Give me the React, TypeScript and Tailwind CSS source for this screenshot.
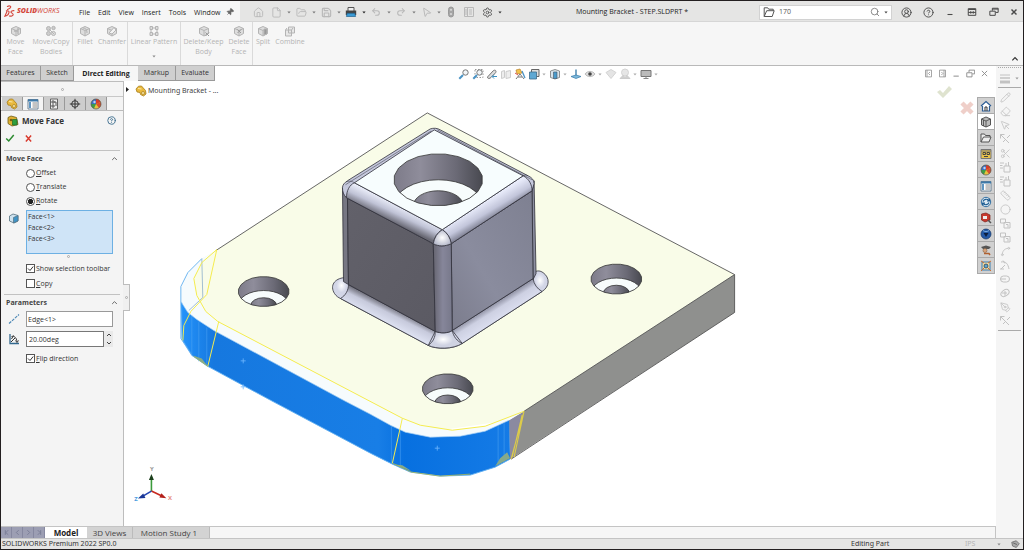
import React, { useState } from "react";
import {
  House, File, FolderOpen, Save, Undo2, Redo2, MousePointer2, Settings, Search,
  CircleUserRound, CircleHelp, Pin, Pencil, Eraser, MousePointer, Ruler, Spline, Circle, Scissors, PenTool,
} from "lucide-react";

type Kids = { children?: React.ReactNode };

function Svg({ children, size = 12 }: Kids & { size?: number }) {
  return (
    <svg width={size} height={size} viewBox="0 0 12 12" fill="none" stroke="currentColor" strokeWidth="1" aria-hidden="true" className="shrink-0">
      {children}
    </svg>
  );
}

function IconButton({ label, className = "w-3.5 h-3.5", children }: Kids & { label: string; className?: string }) {
  return (
    <button type="button" aria-label={label} className={"flex shrink-0 items-center justify-center " + className}>
      {children}
    </button>
  );
}

function Arrow({ className = "w-[11px] text-[#777]" }: { className?: string }) {
  return (
    <button type="button" aria-label="More options" className={"flex h-3 shrink-0 items-center justify-center " + className}>
      <svg width="4" height="3" viewBox="0 0 4 3" fill="currentColor"><path d="M.4.4h3.2L2 2.5z" /></svg>
    </button>
  );
}

/* ---------- title bar ---------- */

function Logo() {
  return (
    <div className="flex w-[70px] shrink-0 items-center gap-[2px] pl-[3px] text-[#d4463c]">
      <svg width="11" height="13" viewBox="0 0 11 13" fill="none" stroke="currentColor" strokeWidth="1.1" strokeLinecap="round">
        <path d="M3.4 1.4c1.7-.8 3.6-.6 3.3.8C6.5 3.2 5 4 3.5 4.5" />
        <path d="M2.4 5.9c2-.5 3 .3 2.5 2C4.400 9.800 2.600 11 .8 11.300L3 6.500" />
        <path d="M9.9 5.6C8.200 5.500 6.900 6 7 7.100c.1 1 2.300 1.200 2.200 2.500C9 11 7 11.400 5.400 11" />
      </svg>
      <span className="text-[7px] leading-[10px] italic"><b className="font-extrabold">SOLID</b>WORKS</span>
    </div>
  );
}

function TitleBar() {
  return (
    <header className="flex h-[21px] shrink-0 items-center border-b border-[#d6d6d6] bg-[#e5e5e4]">
      <div className="flex h-full w-[239px] shrink-0 items-center bg-[#f6f6f6]">
        <Logo />
        <nav className="flex flex-1 gap-2 pt-[3px] pl-2 text-[7px] leading-[10px] text-[#1c1c1c]">
          {["File", "Edit", "View", "Insert", "Tools", "Window"].map((m) => (
            <button type="button" key={m}>{m}</button>
          ))}
        </nav>
        <IconButton label="Pin menu" className="mr-1 h-3 w-3 pt-px text-[#666]"><Pin size={8} className="rotate-45" fill="currentColor" /></IconButton>
      </div>
      <div className="flex shrink-0 items-center pt-[2px] pl-[11px] text-[#b9b9b9]">
        <IconButton label="Home"><House size={11} strokeWidth={2} /></IconButton>
        <IconButton label="New" className="ml-1 h-3.5 w-3.5"><File size={11} strokeWidth={2} /></IconButton><Arrow />
        <IconButton label="Open"><FolderOpen size={11} strokeWidth={2} /></IconButton><Arrow />
        <IconButton label="Save"><Save size={11} strokeWidth={2.5} /></IconButton><Arrow />
        <IconButton label="Print">
          <Svg>
            <path d="M3 5V1.500h6V5" fill="#eee" stroke="#555" />
            <path d="M.8 4.500h10.400v4.500H.8z" fill="#444" stroke="none" />
            <path d="M2.200 7.300h7.600l.8 3.200H1.400z" fill="#3a9bd6" stroke="#24638e" strokeWidth=".7" />
          </Svg>
        </IconButton>
        <Arrow className="w-[11px] text-[#222]" />
        <IconButton label="Undo"><Undo2 size={10} strokeWidth={2.5} /></IconButton><Arrow />
        <IconButton label="Redo"><Redo2 size={10} strokeWidth={2.5} /></IconButton><Arrow />
        <IconButton label="Select"><MousePointer2 size={11} strokeWidth={2} className="rotate-12" /></IconButton><Arrow />
        <IconButton label="Rebuild">
          <Svg><rect x="3.5" y="1" width="5" height="10" rx="2.5" fill="#a5a5a5" stroke="#999" /><circle cx="6" cy="3.8" r="1.1" fill="#d6d6d6" stroke="none" /><circle cx="6" cy="8" r="1.1" fill="#d6d6d6" stroke="none" /></Svg>
        </IconButton>
        <IconButton label="File properties" className="mx-1 h-3.5 w-3.5">
          <Svg><path d="M1.500 1.500h9v9h-9zM4.500 1.500v9M1.500 4h3M1.500 6h3M1.500 8h3M6 4h3M6 6h3M6 8h3" /></Svg>
        </IconButton>
        <IconButton label="Options" className="h-3.5 w-3.5 text-[#555]"><Settings size={11} strokeWidth={2} /></IconButton>
        <Arrow className="w-[11px] text-[#333]" />
      </div>
      <h1 className="min-w-0 flex-1 truncate pt-[2px] text-center text-[7px] leading-[10px] text-[#222]">Mounting Bracket - STEP.SLDPRT *</h1>
      <label className="mt-[2px] flex h-[15px] w-[133px] shrink-0 items-center gap-1 border border-[#d2d2d2] bg-white px-[3px] text-[#777]">
        <Svg><path d="M1.200 10.500V1.800h3.500l1 1.400h4.500v1.500M1.200 10.500l2.500-5.800h7.500l-2 5.800z" stroke="#555" /></Svg>
        <input aria-label="Search" defaultValue="170" className="min-w-0 flex-1 bg-transparent text-[7px] leading-[10px] text-[#555] outline-none" />
        <Search size={10} strokeWidth={2} />
        <svg width="4" height="3" viewBox="0 0 4 3" fill="#444"><path d="M.4.4h3.200L2 2.500z" /></svg>
      </label>
      <div className="ml-[3px] flex shrink-0 pt-[2px] text-[#4a4a4a]">
        <IconButton label="Account" className="h-3.5 w-[22px]"><CircleUserRound size={11} strokeWidth={2} /></IconButton>
        <IconButton label="Help" className="h-3.5 w-[22px]"><CircleHelp size={11} strokeWidth={2} /></IconButton>
        <IconButton label="Minimize" className="h-3.5 w-[22px]"><Svg size={10}><path d="M3 9h6" strokeWidth="1.300" /></Svg></IconButton>
        <IconButton label="Arrange" className="h-3.5 w-[22px]"><Svg size={10}><path d="M1.500 2h9v8h-9zM1.500 3h9M1.500 6.500h9M4.500 5v3M7.500 5v3" strokeWidth="1.200" /></Svg></IconButton>
        <IconButton label="Restore" className="h-3.5 w-[22px]"><Svg size={10}><path d="M1 5h6.500v5H1zM4 4.500v-3h7v5H8M4 2.500h7" strokeWidth="1.200" /></Svg></IconButton>
        <IconButton label="Close" className="h-3.5 w-[18px]"><Svg size={10}><path d="M3 3l6 6M9 3L3 9" strokeWidth="1.700" /></Svg></IconButton>
      </div>
    </header>
  );
}

/* ---------- ribbon ---------- */

function CubeIcon({ extra }: { extra?: React.ReactNode }) {
  return (
    <Svg>
      <path d="M1.500 3.500L6 1.500l4.500 2v5L6 11l-4.500-2.500z" fill="#ddd" />
      <path d="M1.500 3.500L6 5.500l4.500-2M6 5.500V11" />
      {extra}
    </Svg>
  );
}

function Tool({ label, w, icon, drop }: { label: string[]; w: string; icon: React.ReactNode; drop?: boolean }) {
  return (
    <button type="button" className={"flex flex-col items-center text-[7px] leading-[10px] text-[#b4b4b4] " + w}>
      <span className="flex h-3 items-center">{icon}</span>
      {label.map((l) => <span key={l} className="whitespace-nowrap">{l}</span>)}
      {drop && <svg width="4" height="3" viewBox="0 0 4 3" fill="#888" className="mt-2"><path d="M.4.4h3.200L2 2.500z" /></svg>}
    </button>
  );
}

function Group({ children, last }: Kids & { last?: boolean }) {
  return <div className={"flex h-full pt-[3px] " + (last ? "" : "border-r border-[#dadada]")}>{children}</div>;
}

function Ribbon() {
  return (
    <section aria-label="Direct Editing tools" className="flex h-[44px] shrink-0 items-stretch border-b border-[#b9b9b9] bg-[#f6f6f6]">
      <Group>
        <Tool w="w-[29px]" label={["Move", "Face"]} icon={<CubeIcon extra={<path d="M4 6h4M8 3v6" strokeWidth="1.300" />} />} />
        <Tool w="w-[42px]" label={["Move/Copy", "Bodies"]} icon={<Svg><circle cx="3.5" cy="3.5" r="2" fill="#ccc" /><circle cx="8.5" cy="3" r="1.700" fill="#ccc" /><circle cx="3.5" cy="8.5" r="2" fill="#ccc" /><circle cx="8.5" cy="8.5" r="2" fill="#ddd" /><path d="M4 4l5 5" /></Svg>} />
      </Group>
      <Group>
        <Tool w="w-[24px]" label={["Fillet"]} icon={<CubeIcon extra={<path d="M4 3c3 0 4 2 4 5" />} />} />
        <Tool w="w-[30px]" label={["Chamfer"]} icon={<CubeIcon extra={<path d="M3 8l5-5.500L10 5l-4 4z" fill="#f3f3f3" />} />} />
      </Group>
      <Group>
        <Tool w="w-[52px]" drop label={["Linear Pattern"]} icon={<Svg><path d="M2 1.500h2.500V4.500H2zM7.500 1.500H10V4.500H7.500zM2 7.500h2.500v3H2zM7.500 7.500H10v3H7.500zM5 3h2M5 9h2M3 5v2M9 5v2" fill="#ddd" /></Svg>} />
      </Group>
      <Group>
        <Tool w="w-[45px]" label={["Delete/Keep", "Body"]} icon={<CubeIcon extra={<path d="M7.500 7.500l3.500 3.500M11 7.500L7.500 11" stroke="#999" />} />} />
        <Tool w="w-[26px]" label={["Delete", "Face"]} icon={<CubeIcon extra={<path d="M4.500 4.500l3.500 3.500M8 4.500L4.500 8" stroke="#999" />} />} />
      </Group>
      <Group last>
        <Tool w="w-[20px]" label={["Split"]} icon={<CubeIcon extra={<path d="M7 4l3 0v5l-3 1z" fill="#999" />} />} />
        <Tool w="w-[34px]" label={["Combine"]} icon={<Svg><path d="M1.500 5h6v6h-6zM4.500 2h6v6h-6z" fill="#ddd" fillOpacity=".6" /><path d="M1.500 5l1.500-2M7.500 5L9 3" /></Svg>} />
      </Group>
      <IconButton label="Collapse ribbon" className="mr-0.5 ml-auto h-3 w-3 self-end text-[#333]"><Svg size={8}><path d="M2 8l4-4 4 4" strokeWidth="1.800" /></Svg></IconButton>
    </section>
  );
}

/* ---------- command tabs and view toolbar ---------- */

function Magnifier({ box }: { box?: boolean }) {
  return (
    <Svg>
      {box && <path d="M3 1.500h8v8H3z" strokeDasharray="1.5 1.5" stroke="#999" />}
      <circle cx="7.5" cy="4.5" r="2.7" stroke="#777" fill="#f1f5f8" />
      <path d="M1.300 10.700L5 7" stroke="#4a93c4" strokeWidth="2" />
    </Svg>
  );
}

function TabRow() {
  const tabs: [string, string][] = [["Features", "w-[40px]"], ["Sketch", "w-[33px]"], ["Direct Editing", "w-[64px]"], ["Markup", "w-[38px]"], ["Evaluate", "w-[39px]"]];
  const small = "w-[7px] text-[#aaa]";
  return (
    <div className="flex h-[15px] shrink-0 bg-white">
      <div role="tablist" className="flex shrink-0 text-[7px] leading-[10px]">
        {tabs.map(([t, w]) => {
          const on = t === "Direct Editing";
          return (
            <button type="button" role="tab" aria-selected={on} key={t}
              className={w + " whitespace-nowrap " + (on ? "bg-[#f6f6f6] font-bold text-[#222]" : "border-r border-b border-[#999] bg-[#cfcfcf] text-[#333]")}>
              {t}
            </button>
          );
        })}
      </div>
      <div className="flex flex-1 items-center justify-center pt-px pr-5 text-[#777]">
        <IconButton label="Zoom to fit"><Magnifier /></IconButton>
        <IconButton label="Zoom to area"><Magnifier box /></IconButton>
        <IconButton label="Previous view"><Svg><path d="M1.500 9L7 3c2-2 4 0 2.500 1.800L5 9.500C3.500 11 1 10.500 1.500 9z" fill="#ddd" /><path d="M11 8.500H6.500M8 6.500l-2 2 2 2" stroke="#3a8fc0" /></Svg></IconButton>
        <IconButton label="Section view"><Svg><path d="M1.500 3.500l3-1v7l-3 1zM6 3.500l4.500-1v7L6 10.500z" fill="#eee" stroke="#ccc" /></Svg></IconButton>
        <IconButton label="Dynamic annotation views"><Svg><path d="M2 2l4-1 2 4-5 1z" fill="#f3c24b" stroke="#b9822c" strokeWidth=".7" /><path d="M2 11l4-5 4 5M4 9h4" stroke="#777" /><path d="M8 3l3 7" stroke="#4a93c4" strokeWidth="1.300" /><path d="M1 5l3 2" stroke="#d55" /></Svg></IconButton>
        <IconButton label="View orientation"><Svg><path d="M3.500 4V1.500h7.500V8.500H8.500" fill="#ddd" stroke="#666" /><path d="M1.500 4h7v7h-7z" fill="#5fa8d3" stroke="#3d6c8b" strokeWidth=".8" /></Svg></IconButton>
        <Arrow className={small} />
        <IconButton label="Display style"><Svg><path d="M1.500 3L6 1.500l4.500 1.500v6.500L6 11 1.500 9.500z" fill="#d7e4ec" stroke="#777" strokeWidth=".8" /><path d="M4.500 4h3.500v6.500H4.500z" fill="#4b9bcb" stroke="#456" strokeWidth=".6" /></Svg></IconButton>
        <Arrow className={small} />
        <IconButton label="Reference triad"><Svg><path d="M6 1.500V8" stroke="#3379a8" strokeWidth="1.300" /><path d="M1 8.500l5-1.500 5 1.500L6 10.500z" fill="#7db9dc" stroke="#3379a8" strokeWidth=".7" /></Svg></IconButton>
        <IconButton label="Hide or show items"><Svg><path d="M1 6c2.500-3.500 7.500-3.500 10 0-2.500 3.500-7.500 3.500-10 0z" stroke="#bbb" fill="#ddd" /><circle cx="6" cy="6" r="1.800" fill="#444" stroke="none" /></Svg></IconButton>
        <Arrow className={small} />
        <IconButton label="Edit appearance"><Svg><path d="M1 4.500L6 1.500l5 3L6 10.500z" fill="#e4e4e4" stroke="#d4d4d4" /></Svg></IconButton>
        <IconButton label="Apply scene"><Svg><circle cx="6" cy="4.5" r="3.5" fill="#e6e6e6" stroke="#d4d4d4" /><path d="M1 10.500l3-3 2 2 2-2 3 3z" fill="#d0d0d0" stroke="#ccc" /></Svg></IconButton>
        <Arrow className={small} />
        <IconButton label="View settings"><Svg><path d="M1 2.500h10V8.500H1z" fill="#bbb" stroke="#777" /><path d="M6 8.500v2M3.500 10.500h5" stroke="#888" /></Svg></IconButton>
        <Arrow className={small} />
      </div>
      <div className="flex shrink-0 items-center pr-[5px] text-[#8a8a8a]">
        <IconButton label="Previous pane"><Svg size={9}><path d="M2 1.500h8v9H2zM4 1.500v9M8 4L6 6l2 2" /></Svg></IconButton>
        <IconButton label="Next pane"><Svg size={9}><path d="M2 1.500h8v9H2zM8 1.500v9M4.500 4l2 2-2 2" /></Svg></IconButton>
        <IconButton label="Minimize document"><Svg size={9}><path d="M2 9.500h7" strokeWidth="1.300" /></Svg></IconButton>
        <IconButton label="Restore document"><Svg size={9}><path d="M1 5h7v5.500H1zM4 4.500v-3h7.500v5H8.500" strokeWidth="1.200" /></Svg></IconButton>
        <IconButton label="Close document"><Svg size={9}><path d="M2.500 2.500l7 7M9.500 2.500l-7 7" strokeWidth="1.200" /></Svg></IconButton>
      </div>
    </div>
  );
}

/* ---------- property manager ---------- */

function PartIcon() {
  return (
    <Svg>
      <path d="M1 4L3.500 1.200 6.500 1l4 4.500L11 9 8.500 11 5.500 9.500 5 7.500 2 7z" fill="#e9b93d" stroke="#a87f1c" strokeWidth=".8" />
      <circle cx="8" cy="8" r="1.500" fill="#fbe7a8" stroke="#9c7415" strokeWidth=".6" />
      <path d="M3 3.500l3.500.5" stroke="#fbe7a8" />
    </Svg>
  );
}

function BallIcon() {
  return (
    <Svg>
      <circle cx="6" cy="6" r="5" fill="#e8c33c" stroke="none" />
      <path d="M6 6V1a5 5 0 0 1 4.500 3z" fill="#d63b2c" stroke="none" />
      <path d="M6 6V1a5 5 0 0 0-5 5z" fill="#3b6fc4" stroke="none" />
      <path d="M6 6H1a5 5 0 0 0 3 4.600z" fill="#3d9b47" stroke="none" />
      <path d="M6 6l4.500-2A5 5 0 0 1 9 10z" fill="#d9502f" stroke="none" />
      <circle cx="6" cy="6" r="5" stroke="#555" strokeWidth=".7" />
      <circle cx="4.5" cy="4" r="1.200" fill="#fff" fillOpacity=".7" stroke="none" />
    </Svg>
  );
}

function TreeListIcon() {
  return (
    <Svg>
      <path d="M1 1.500h10v9.500H1z" fill="#fff" stroke="#6c8295" />
      <path d="M1 1.500h10V3.500H1z" fill="#3d79a8" stroke="none" />
      <path d="M2 5h2M2 7h2M2 9h2" stroke="#2c74ae" strokeWidth="1.300" />
      <path d="M5.500 5h4.500M5.500 7h4.500M5.500 9h4.500" stroke="#888" />
    </Svg>
  );
}

function SectionTitle({ children }: Kids) {
  return (
    <div className="mx-[3px] flex h-4 items-center border-t border-[#c2c2c2] px-[2px]">
      <h3 className="flex-1 text-[7px] leading-[10px] font-bold text-[#444]">{children}</h3>
      <IconButton label="Collapse section" className="h-2 w-2 text-[#555]"><Svg size={7}><path d="M2 8.500l4-4 4 4" strokeWidth="1.500" /></Svg></IconButton>
    </div>
  );
}

function Radio({ letter, rest, value, onPick }: { letter: string; rest: string; value: string; onPick: (v: string) => void }) {
  const name = letter + rest;
  return (
    <label className="flex h-[14px] items-center gap-px">
      <input type="radio" name="mode" checked={value === name} onChange={() => onPick(name)}
        className="h-[9px] w-[9px] appearance-none rounded-full border border-[#555] bg-white checked:bg-[radial-gradient(circle,#222_45%,#fff_60%)]" />
      <span><u className="underline-offset-1">{letter}</u>{rest}</span>
    </label>
  );
}

function Check({ children, on }: Kids & { on?: boolean }) {
  return (
    <label className="flex h-[15px] items-center gap-px">
      <span className="relative flex h-[9px] w-[9px] shrink-0">
        <input type="checkbox" defaultChecked={on} className="peer h-[9px] w-[9px] appearance-none border border-[#555] bg-white" />
        <svg viewBox="0 0 9 9" className="pointer-events-none absolute inset-0 hidden peer-checked:block" fill="none" stroke="#333"><path d="M2 4.500l2 2 3.200-4" /></svg>
      </span>
      <span className="whitespace-nowrap">{children}</span>
    </label>
  );
}

function Dot() {
  return <span className="block h-[3px] w-[3px] rounded-full border border-[#aaa]" />;
}

function PropertyPanel() {
  const [mode, setMode] = useState("Rotate");
  const tabs: [string, React.ReactNode][] = [
    ["Feature tree", <PartIcon />],
    ["Properties", <TreeListIcon />],
    ["Configurations", <Svg><path d="M2.500 1h7v10h-7z" fill="#eee" stroke="#666" /><path d="M4 3h2v2H4zM4 7h2v2H4zM6 4h2v4" stroke="#555" /></Svg>],
    ["Dimensions", <Svg><circle cx="6" cy="6" r="3.300" stroke="#333" /><path d="M6 .8v10.400M.8 6h10.400" stroke="#333" /></Svg>],
    ["Display", <BallIcon />],
  ];
  return (
    <aside className="relative z-10 flex w-[123px] shrink-0 flex-col border-t border-r border-[#bdbdbd] bg-[#f4f4f4] text-[7px] leading-[10px] text-[#333]">
      <div className="flex h-[15px] items-center justify-center border-b border-[#c8c8c8]"><Dot /></div>
      <div role="tablist" className="flex h-[14px] border-b border-[#bbb] px-px">
        {tabs.map(([n, icon], i) => (
          <button type="button" role="tab" key={n} aria-label={n} aria-selected={i === 1}
            className={"flex h-[13px] w-[21px] items-center justify-center border-r border-[#999] " + (i === 1 ? "bg-[#f4f4f4]" : "bg-[#cdcdcd]")}>
            {icon}
          </button>
        ))}
      </div>
      <div className="flex h-[19px] items-center gap-[3px] px-[6px]">
        <Svg><path d="M1 2.500L4 1l5.500 1.500L11 9.500 5 11 1 8.500z" fill="#e0b130" stroke="#6c5a17" strokeWidth=".8" /><path d="M5.500 4.500h4.500v5.500H5.500z" fill="#2f9e3f" stroke="#1d6c2a" strokeWidth=".7" /><circle cx="4" cy="5" r="1.300" fill="#7a5d12" stroke="none" /></Svg>
        <h2 className="flex-1 text-[8px] leading-[12px] font-bold">Move Face</h2>
        <IconButton label="Help" className="h-3 w-3 text-[#3f6f8f]"><CircleHelp size={9} strokeWidth={2.5} /></IconButton>
      </div>
      <div className="flex h-5 items-start gap-[6px] px-[3px] pt-[2px]">
        <IconButton label="OK" className="h-3 w-3"><Svg size={10}><path d="M1.500 6.500L4.500 9.500 10.500 2.500" stroke="#2b8a2f" strokeWidth="1.800" /></Svg></IconButton>
        <IconButton label="Cancel" className="h-3 w-3"><Svg size={9}><path d="M2.500 2l7 8M9.500 2l-7 8" stroke="#d93a2d" strokeWidth="1.900" /></Svg></IconButton>
      </div>
      <SectionTitle>Move Face</SectionTitle>
      <fieldset className="pl-[25px]" aria-label="Move type">
        <Radio letter="O" rest="ffset" value={mode} onPick={setMode} />
        <Radio letter="T" rest="ranslate" value={mode} onPick={setMode} />
        <Radio letter="R" rest="otate" value={mode} onPick={setMode} />
      </fieldset>
      <div className="mt-[2px] flex items-start gap-[6px] pl-[7px]">
        <span className="pt-[2px]"><Svg><path d="M1.500 4L5 2l5 1.500v5.500L6 11l-4.500-2z" fill="#cfe2ee" stroke="#53707f" strokeWidth=".8" /><path d="M5.500 5.500L10 3.500V9L5.500 11z" fill="#3f93c6" stroke="#53707f" strokeWidth=".7" /></Svg></span>
        <ul role="listbox" aria-label="Faces to move" className="h-[44px] w-[87px] border border-[#6db0e3] bg-[#cfe4f7] px-px leading-[11px]">
          {["Face<1>", "Face<2>", "Face<3>"].map((f) => <li role="option" aria-selected="false" key={f}>{f}</li>)}
        </ul>
      </div>
      <div className="flex h-[7px] justify-center pt-px pl-3"><Dot /></div>
      <div className="pb-[3px] pl-[25px]">
        <Check on>Show selection toolbar</Check>
        <Check><u className="underline-offset-1">C</u>opy</Check>
      </div>
      <SectionTitle>Parameters</SectionTitle>
      <label className="mt-px flex items-center gap-[6px] pl-[7px]">
        <Svg><path d="M1 10.500L11 1.500" stroke="#4a86b4" strokeDasharray="3 1" strokeWidth="1.100" /></Svg>
        <input aria-label="Axis" defaultValue="Edge<1>" className="h-4 w-[87px] border border-[#999] bg-white px-px" />
      </label>
      <div className="mt-1 flex items-center pl-[7px]">
        <Svg><path d="M2 1v9.500h9" stroke="#33698f" strokeWidth="1.300" /><path d="M3.500 3.500c3-1 5 1.500 5.500 5M3.500 6l2-3.500M7.500 7.500l1.500 2 1.500-2M3 9l4-4" stroke="#333" /></Svg>
        <input aria-label="Rotation angle" defaultValue="20.00deg" className="ml-[6px] h-4 w-[78px] border border-[#777] bg-white px-[2px]" />
        <span className="flex h-4 w-[9px] flex-col bg-[#e9e9e9] text-[#444]">
          <IconButton label="Increase angle" className="h-2 w-[9px]"><Svg size={6}><path d="M2 8l4-4 4 4" strokeWidth="2" /></Svg></IconButton>
          <IconButton label="Decrease angle" className="h-2 w-[9px]"><Svg size={6}><path d="M2 4l4 4 4-4" strokeWidth="2" /></Svg></IconButton>
        </span>
      </div>
      <div className="mt-1 pl-[25px]"><Check on><u className="underline-offset-1">F</u>lip direction</Check></div>
      <button type="button" aria-label="Collapse panel" className="absolute top-[202px] -right-[7px] flex h-[27px] w-[7px] items-center justify-center border border-l-0 border-[#bdbdbd] bg-[#f0f0f0]"><Dot /></button>
    </aside>
  );
}

/* ---------- graphics area ---------- */

function Hole({ id, cx, cy, rx, ry, inner, lift }: { id: string; cx: number; cy: number; rx: number; ry: number; inner: number; lift: number }) {
  const pts: string[] = [];
  for (let i = 0; i < 20; i++) {
    const a = (i / 20) * Math.PI * 2 + 0.157;
    pts.push((cx + rx * Math.cos(a)).toFixed(1) + "," + (cy + ry * Math.sin(a)).toFixed(1));
  }
  const outline = pts.join(" ");
  return (
    <g stroke="#333" strokeWidth=".8">
      <clipPath id={id}><polygon points={outline} /></clipPath>
      <g clipPath={"url(#" + id + ")"}>
        <rect x={cx - rx} y={cy - ry} width={rx * 2} height={ry * 2} fill="url(#bore)" stroke="none" />
        <ellipse cx={cx} cy={cy + lift} rx={rx} ry={ry} fill="#f7fcfc" />
        <ellipse cx={cx} cy={cy + lift} rx={inner} ry={inner * 0.6} fill="url(#bore)" />
      </g>
      <polygon points={outline} fill="none" />
    </g>
  );
}

function BracketModel() {
  const topBlue = "M180 301L187 312 196 319 213 330 343 400 370 414 390 425 405 432 430 437 460 436 485 431 509 420";
  return (
    <svg viewBox="124 80 872 446" className="absolute inset-0 h-full w-full" role="img" aria-label="Mounting bracket model">
      <defs>
        <linearGradient id="bore"><stop offset="0" stopColor="#7d7b89" /><stop offset=".3" stopColor="#8f8d9b" /><stop offset=".7" stopColor="#6b6a76" /><stop offset="1" stopColor="#484950" /></linearGradient>
        <linearGradient id="blue"><stop offset="0" stopColor="#2493fb" /><stop offset=".1" stopColor="#1678df" /><stop offset=".6" stopColor="#187ee6" /><stop offset=".68" stopColor="#0770e0" /><stop offset="1" stopColor="#157be6" /></linearGradient>
        <linearGradient id="leftFace" x1="0" y1="0" x2="1" y2="1"><stop offset="0" stopColor="#62616a" /><stop offset="1" stopColor="#5b5a63" /></linearGradient>
        <linearGradient id="rightFace" x1="1" y1="0" x2="0" y2="1"><stop offset="0" stopColor="#7e8091" /><stop offset=".6" stopColor="#8a8c9e" /><stop offset="1" stopColor="#7b7c8c" /></linearGradient>
        <linearGradient id="post"><stop offset="0" stopColor="#666570" /><stop offset=".5" stopColor="#86869a" /><stop offset="1" stopColor="#77788a" /></linearGradient>
        <linearGradient id="edgeL" gradientUnits="userSpaceOnUse" x1="399" y1="204" x2="391" y2="221"><stop offset="0" stopColor="#edf0fb" /><stop offset=".5" stopColor="#c0c3d6" /><stop offset="1" stopColor="#686873" /></linearGradient>
        <linearGradient id="edgeR" gradientUnits="userSpaceOnUse" x1="483" y1="202" x2="492" y2="217"><stop offset="0" stopColor="#e8ebfa" /><stop offset=".6" stopColor="#c2c5da" /><stop offset="1" stopColor="#858799" /></linearGradient>
        <linearGradient id="footL" gradientUnits="userSpaceOnUse" x1="393" y1="307" x2="385" y2="323"><stop offset="0" stopColor="#6f6f7a" /><stop offset=".4" stopColor="#c7cadc" /><stop offset="1" stopColor="#dfe3f3" /></linearGradient>
        <linearGradient id="footR" gradientUnits="userSpaceOnUse" x1="492" y1="303" x2="502" y2="319"><stop offset="0" stopColor="#858799" /><stop offset=".4" stopColor="#cdd0e2" /><stop offset="1" stopColor="#dde0f1" /></linearGradient>
        <radialGradient id="ball"><stop offset="0" stopColor="#ffffff" /><stop offset="1" stopColor="#b9bccd" /></radialGradient>
        <radialGradient id="glow"><stop offset="0" stopColor="#ffffff" /><stop offset="1" stopColor="#ffffff" stopOpacity="0" /></radialGradient>
      </defs>

      {/* base plate */}
      <path d="M427 112L735 274 524 411 510 420 370 440 180 301 180 286 187 272 201 258 215 250z" fill="#f9fce8" />
      <path d="M735 274V312L510 459 509 420 524 411z" fill="#8f908e" />
      <path d="M509 420L524 411 513 457 510 459z" fill="#8b8aa0" />
      <path d="M215 250L201 262 193 278 196 295 205 311 217 321 402 418 420 425 452 430 485 426 524 411 509 420 485 431 460 436 430 437 405 432 390 425 370 414 343 400 213 330 196 319 187 312 180 301 180 286 187 272 201 258z" fill="#f6fbfd" />
      <path d={topBlue + "L510 459 495 467 470 475 440 476 410 472 392 464 370 453 270 400 207 366 191 355 181 339z"} fill="url(#blue)" />
      <path d="M181 302V338L191 354V315M198 321v40M206 327v39M391 426v37M400 431v37M498 426v39M504 423v39" fill="none" stroke="#56a8f5" strokeOpacity=".6" strokeWidth=".8" />
      <path d="M192 355L207 366 201 358zM393 464L411 471 402 465zM495 466L510 458 507 452 500 458z" fill="#86a98a" />
      <path d="M215 250L427 112 735 274 524 411M735 274V312L511 459" fill="none" stroke="#555" strokeWidth=".9" />
      <path d="M201 258L187 272 180 286V338L191 355 207 366 270 400 370 453 392 464 410 472 440 476 470 475 495 467 510 459" fill="none" stroke="#60aef0" strokeWidth=".9" />
      <path d="M201 258L202 297 188 310" fill="none" stroke="#8caecc" strokeWidth=".8" />
      <path d={topBlue} fill="none" stroke="#9bcaf4" strokeWidth=".7" />
      <path d="M216 249L201 262 193 278 196 295 205 311 217 321 402 418 420 425 452 430 485 426 524 411M216 249L206 294 190 311 183 325 182 340M218 321L207 366M402 418L392 463" fill="none" stroke="#f5ec4e" strokeWidth="1" />
      <path d="M524 411L511 459M524 411L514 457M522 415L512 457" fill="none" stroke="#dccb4a" strokeWidth="1.100" />
      <path d="M207 366L193 356M392 463L411 472 440 476 470 474" fill="none" stroke="#a9b650" strokeWidth=".8" />
      <path d="M240 360.500h5M242.500 358v5M434.500 448h5M437 445.500v5M240 386.500h5M242.500 384v5" stroke="#70b8ff" strokeWidth=".8" />

      {/* counterbored mounting holes */}
      <Hole id="holeA" cx={263} cy={291} rx={25.5} ry={15} inner={13} lift={14} />
      <Hole id="holeB" cx={616.5} cy={278.5} rx={25.5} ry={15} inner={13} lift={14} />
      <Hole id="holeC" cx={447.5} cy={388.5} rx={25.5} ry={15} inner={13} lift={14} />

      {/* boss with fillets */}
      <g stroke="#30303a" strokeWidth=".8" strokeLinejoin="round">
        <path d="M344 277C334 278 329 285 334 293 336 296 338 297 340 298L428 345C436 349 453 349 462 343L542 291C550 286 550 277 543 272 540 270 538 270 535 271L440 250z" fill="#d3d6e7" />
        <path d="M348 284L435 331 428 345 340 298C345 295 348 290 348 284z" fill="url(#footL)" />
        <path d="M533 278L452 330 462 343 542 291C537 288 534 284 533 278z" fill="url(#footR)" />
        <path d="M435 331C440 333 448 333 452 330 453 336 457 341 462 343 453 349 436 349 428 345 433 341 435 337 435 331z" fill="#cfd2e2" />
        <ellipse cx="443" cy="339" rx="10" ry="6" fill="url(#glow)" stroke="none" />
        <ellipse cx="341" cy="285" rx="5" ry="7" fill="url(#glow)" stroke="none" />
        <ellipse cx="540" cy="280" rx="5" ry="7" fill="url(#glow)" stroke="none" />
        <path d="M342 187L347 197 348 284 343 281z" fill="#777783" />
        <path d="M534 180L532 190 533 279 536 273z" fill="#8d8fa1" />
        <path d="M347 197L433 243 435 331 348 284z" fill="url(#leftFace)" />
        <path d="M451 243L532 190 533 278 452 330z" fill="url(#rightFace)" />
        <path d="M433 243L451 243 452 330C448 333 440 333 435 331z" fill="url(#post)" />
        <path d="M342 187C342 184 344 182 347 180L430 128C433 127 437 127 440 129L528 175C532 177 534 179 534 183L532 190 451 243C445 246 438 246 433 243L346 197C343 194 342 191 342 187z" fill="#c5c8dc" />
        <path d="M354 182L442 229C437 232 434 237 433 243L346 197C346 190 349 184 354 182z" fill="url(#edgeL)" />
        <path d="M442 229L523 175C529 178 532 184 532 190L451 243C450 237 447 232 442 229z" fill="url(#edgeR)" />
        <path d="M442 229C437 232 434 237 433 243 438 246 445 246 451 243 450 237 447 232 442 229z" fill="url(#ball)" />
        <path d="M354 182L434 129 523 175 442 229z" fill="#f7fdfe" />
        <path d="M346 181C349 180 351 180 354 182M528 175C526 174 524 174 523 175M345 184L431 130M532 179L437 129" fill="none" strokeWidth=".5" />
      </g>
      <Hole id="boreHole" cx={438} cy={179} rx={44.5} ry={26} inner={25} lift={26} />

      {/* orientation triad */}
      <g strokeWidth="1.6" fontFamily="Open Sans, sans-serif" fontSize="6" fontWeight="700" textAnchor="middle">
        <path d="M150.500 491V477" stroke="#3c9a3c" /><path d="M148 480l2.500-6 2.500 6z" fill="#1c3f1c" />
        <path d="M150.500 491L161 496" stroke="#c8281e" /><path d="M158.500 497.500l7 .8-5-5z" fill="#b3201a" />
        <path d="M150.500 491L142 496" stroke="#2344b0" /><path d="M144.500 498l-7.500.5 5.300-5z" fill="#1b3796" />
        <text x="151" y="471" fill="#999">Y</text><text x="169" y="500" fill="#e58a80">X</text><text x="135" y="501" fill="#4a9be0">Z</text>
      </g>
    </svg>
  );
}

function TaskPane() {
  const items: [string, React.ReactNode][] = [
    ["Resources", <Svg><path d="M1 6l5-4.500L11 6M2.500 6v5h7V6" fill="#fff" stroke="#2c5c94" strokeWidth="1.200" /><path d="M5 11V7h2v4" stroke="#333" /></Svg>],
    ["Design library", <Svg><path d="M1.500 3L6 1l4.500 2v6L6 11 1.500 9z" fill="#bbb" stroke="#555" /><path d="M1.500 3L6 5l4.500-2M6 5v6M3.500 4v6" stroke="#444" strokeWidth=".8" /></Svg>],
    ["File explorer", <Svg><path d="M1 10V2h3.500l1 1.500H10V5M1 10l2.500-5H11L9 10z" fill="#eee" stroke="#555" /></Svg>],
    ["View palette", <Svg><path d="M1 1.500h10v9H1z" fill="#e7c24c" stroke="#777" /><path d="M1 3h10" stroke="#777" /><path d="M3 4.500h2.500v2H3zM7 4.500h2.500v2H7zM4 8.500h4" stroke="#444" /></Svg>],
    ["Appearances", <BallIcon />],
    ["Custom properties", <TreeListIcon />],
    ["Forum", <Svg><circle cx="6" cy="6" r="4.700" fill="#dbe9f3" stroke="#3471a3" /><path d="M3 5.500c1-2.500 4-3 6-1M9.500 2.500V5H7M9 6.500c-1 2.500-4 3-6 1M2.500 9.500V7H5" stroke="#1f5d92" strokeWidth="1.200" /></Svg>],
    ["Inspection", <Svg><path d="M1.500 2L6 1l4 2v5L5 10 1.500 8z" fill="#c8382d" stroke="#7d221b" strokeWidth=".7" /><path d="M3 4h4v3H3z" fill="#eee" stroke="none" /><path d="M8 8l3 3" stroke="#555" strokeWidth="1.500" /></Svg>],
    ["Marketplace", <Svg><circle cx="6" cy="6" r="5" fill="#2459a6" stroke="#153766" strokeWidth=".7" /><path d="M3 2.500c2 1.500 4 1.500 6 0" stroke="#8fc3ee" strokeWidth=".8" /><path d="M3.500 5h5L6 9z" fill="#0d1f3d" stroke="none" /></Svg>],
    ["Services", <Svg><path d="M1 3l5-1.500L11 3 9 5H3z" fill="#555" stroke="none" /><circle cx="5" cy="6.5" r="2" fill="#d8a27d" stroke="#864" strokeWidth=".6" /><path d="M4 9.500h5l1 1.500" stroke="#b06030" strokeWidth="1.500" /></Svg>],
    ["Assistant", <Svg><path d="M2 2h8v8H2z" fill="#f0d9a6" stroke="#3a7fb2" /><circle cx="6" cy="6" r="2" fill="#58a6d8" stroke="#333" strokeWidth=".7" /><path d="M1 1l3 2M11 1L8 3M1 11l3-3M11 11L8 8" stroke="#d07030" /></Svg>],
  ];
  return (
    <div className="relative mt-4 flex w-[18px] shrink-0 flex-col self-start border border-b-0 border-[#aaa]">
      {items.map(([n, icon], i) => (
        <IconButton key={n} label={n} className={"h-4 w-4 border-b border-[#aaa] " + (i === 1 ? "bg-white" : "bg-[#d0d0d0]")}>{icon}</IconButton>
      ))}
    </div>
  );
}

function Viewport() {
  return (
    <main className="relative flex min-w-0 flex-1 bg-white pr-px">
      <BracketModel />
      <div className="relative flex h-5 flex-1 items-center pl-[2px] font-['Noto_Sans',sans-serif] text-[7px] leading-[10px] text-[#444]">
        <svg width="3" height="5" viewBox="0 0 3 5" fill="#222" className="-mt-1 mr-[6px]"><path d="M0 0l3 2.500L0 5z" /></svg>
        <PartIcon />
        <span className="pl-px">Mounting Bracket - ...</span>
      </div>
      <div className="relative flex items-start pt-[3px] pr-[3px]">
        <IconButton label="Accept" className="h-[15px] w-[17px]">
          <svg width="17" height="14" viewBox="0 0 17 14"><path d="M1 7l3-2 3 3 6-7 3 3-9 9z" fill="#dfe3cf" /></svg>
        </IconButton>
        <IconButton label="Reject" className="mt-4 ml-[6px] h-[15px] w-[15px]">
          <svg width="14" height="14" viewBox="0 0 14 14" stroke="#efcfc9" strokeWidth="4.5"><path d="M2 2l10 10M12 2L2 12" /></svg>
        </IconButton>
      </div>
      <TaskPane />
    </main>
  );
}

function SketchBar() {
  const p = { size: 11, strokeWidth: 1.8 };
  const square = <Svg><path d="M5 5h6v6H5zM1 2h4M1 4.500h2.500M7 2v3M9.500 1v4M1 7h3" /></Svg>;
  const arrow = <Svg><path d="M1.500 5.500v-4h4M1.500 1.500L10 10M4 9l2-2M8 5l3-3" /></Svg>;
  const copy = <Svg><path d="M1.500 2h5v4h-5zM5 5.500h6V11H5zM7 7.500h2v3" /></Svg>;
  const items: [string, React.ReactNode][] = [
    ["Sketch", <Pencil {...p} />], ["Erase", <Eraser {...p} />], ["Select", <MousePointer {...p} />], ["Smart dimension", arrow],
    ["Trim", <Scissors {...p} />], ["Convert entities", square], ["Offset entities", square], ["Line", <Ruler {...p} />],
    ["Circle", <Circle {...p} />], ["Copy entities", copy], ["Move entities", copy], ["Spline", <Spline {...p} />],
    ["Arc", <Svg><path d="M2 3c5-1 7 2 8 7M2 10l4-4M1 10h4M4 1.500l2 3" /></Svg>],
    ["Slot", <Svg><rect x="1.5" y="3" width="9" height="6" rx="3" /><path d="M1 6h6" /></Svg>],
    ["Ellipse", <Svg><ellipse cx="6" cy="6" rx="4.5" ry="3" transform="rotate(-35 6 6)" /><path d="M3 6h5M6 4v5" /></Svg>],
    ["Pen", <PenTool {...p} />], ["Point", arrow],
  ];
  return (
    <div role="toolbar" aria-label="Sketch tools" className="flex w-[27px] shrink-0 flex-col bg-[#f5f5f5] px-[2px] text-[#c2c2c2]">
      <div className="mt-px border-t border-dotted border-[#aaa]" />
      <div className="flex h-5 items-center border-b border-[#aaa] pt-[2px]">
        <IconButton label="Line style" className="h-3.5 w-3.5"><Svg><path d="M1 2h10" /><path d="M1 5h10" strokeWidth="1.500" /><path d="M1 9h10" strokeWidth="3" /></Svg></IconButton>
        <Arrow className="w-[9px] text-[#999]" />
      </div>
      <div className="flex flex-col border-b border-[#aaa] pt-[2px] pb-[2px]">
        {items.map(([n, icon]) => <IconButton key={n} label={n}>{icon}</IconButton>)}
      </div>
    </div>
  );
}

/* ---------- bottom ---------- */

function BottomTabs() {
  const nav = ["M4 2v8M9 2L5 6l4 4", "M8 2L4 6l4 4", "M4 2l4 4-4 4", "M8 2v8M3 2l4 4-4 4"];
  return (
    <div className="flex h-3 shrink-0 border-t border-r border-[#c4c4c4] bg-[#f6f6f6] text-[8px] leading-[11px] text-[#444]">
      <div className="flex bg-[#9c9eb3]">
        {nav.map((d, i) => <IconButton key={d} label={["First tab", "Previous tab", "Next tab", "Last tab"][i]} className="h-[11px] w-[11px] border-r border-[#8688a0] text-[#777a94]"><Svg size={7}><path d={d} strokeWidth="1.500" /></Svg></IconButton>)}
      </div>
      <button type="button" className="w-[42px] bg-white font-bold text-[#222]">Model</button>
      <button type="button" className="w-[46px] border-r border-[#bbb] bg-[#d3d3d3]">3D Views</button>
      <button type="button" className="w-[77px] border-r border-[#bbb] bg-[#d3d3d3] pr-1">Motion Study 1</button>
    </div>
  );
}

export default function App() {
  return (
    <div className="flex h-screen flex-col overflow-hidden border border-[#231f20] bg-white font-['Open_Sans','Noto_Sans',sans-serif]">
      <TitleBar />
      <Ribbon />
      <div className="flex min-h-0 flex-1">
        <div className="flex min-w-0 flex-1 flex-col">
          <TabRow />
          <div className="flex min-h-0 flex-1">
            <PropertyPanel />
            <Viewport />
          </div>
          <BottomTabs />
        </div>
        <SketchBar />
      </div>
      <footer className="flex h-[11px] shrink-0 items-center border-t border-[#c4c4c4] bg-[#e5e5e4] pr-[2px] pl-px font-['Noto_Sans',sans-serif] text-[7px] leading-[10px] text-[#333]">
        <span className="flex-1">SOLIDWORKS Premium 2022 SP0.0</span>
        <span className="w-[114px]">Editing Part</span>
        <span className="w-[29px] text-[#b5b5b5]">IPS</span>
        <Arrow className="w-[10px] text-[#888]" />
        <IconButton label="Tags" className="ml-[6px] h-[10px] w-[11px]"><Svg size={9}><path d="M1 3l6-2 4 4-4 5-5-2z" fill="#aaa" stroke="#666" /><path d="M3 4l5 2" stroke="#555" /></Svg></IconButton>
      </footer>
    </div>
  );
}
